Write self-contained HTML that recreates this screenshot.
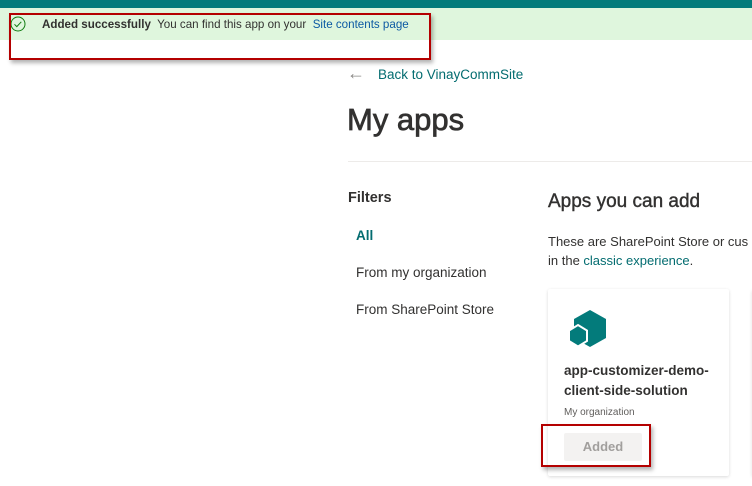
<!DOCTYPE html>
<html><head><meta charset="utf-8"><style>
body{margin:0;width:752px;height:486px;overflow:hidden;background:#fff;font-family:"Liberation Sans",sans-serif;position:relative;color:#323130}
.a{position:absolute;white-space:nowrap}
</style></head><body>
<div class="a" style="left:0;top:0;width:752px;height:8px;background:#037b7b"></div>
<div class="a" style="left:0;top:8px;width:752px;height:32px;background:#dff6dd"></div>
<svg class="a" style="left:10px;top:16px" width="16" height="16" viewBox="0 0 16 16"><circle cx="8" cy="8" r="7" fill="none" stroke="#107c10" stroke-width="1"/><path d="M4.5 8.3l2.3 2.3 4.5-4.8" fill="none" stroke="#107c10" stroke-width="1"/></svg>
<div class="a" style="left:42px;top:18px;font-size:11.6px;color:#323130"><b style="font-weight:600">Added successfully</b>&nbsp; You can find this app on your&nbsp; <span style="color:#0b59a3">Site contents page</span></div>
<div class="a" style="left:9px;top:13px;width:418px;height:43px;border:2px solid #b40000;box-shadow:2px 3px 4px rgba(0,0,0,.3)"></div>
<div class="a" style="left:347px;top:63px;font-size:18px;color:#8a8886">←</div>
<div class="a" style="left:378px;top:67px;font-size:13.5px;color:#036c70">Back to VinayCommSite</div>
<div class="a" style="left:347px;top:102px;font-size:31px;color:#323130;-webkit-text-stroke:0.7px #323130">My apps</div>
<div class="a" style="left:348px;top:161px;width:404px;height:1px;background:#edebe9"></div>
<div class="a" style="left:348px;top:190px;font-size:14.5px;font-weight:bold">Filters</div>
<div class="a" style="left:356px;top:228px;font-size:13.5px;color:#036c70;font-weight:bold">All</div>
<div class="a" style="left:356px;top:265px;font-size:13.5px">From my organization</div>
<div class="a" style="left:356px;top:302px;font-size:13.5px">From SharePoint Store</div>
<div class="a" style="left:548px;top:191px;font-size:19px;-webkit-text-stroke:0.4px #323130">Apps you can add</div>
<div class="a" style="left:548px;top:234px;font-size:13px">These are SharePoint Store or cus</div>
<div class="a" style="left:548px;top:253px;font-size:13px">in the <span style="color:#036c70">classic experience</span>.</div>
<div class="a" style="left:548px;top:289px;width:181px;height:187px;background:#fff;border-radius:2px;box-shadow:0 1px 3px rgba(0,0,0,.15)"></div>
<div class="a" style="left:752px;top:290px;width:2px;height:186px;box-shadow:0 1px 3px rgba(0,0,0,.15)"></div>
<svg class="a" style="left:560px;top:305px" width="52" height="52" viewBox="560 305 52 52"><polygon points="590,310 606,319 606,338 590,347 574,338 574,319" fill="#037b7b"/><polygon points="578,325 587,330.5 587,341 578,346.5 569,341 569,330.5" fill="#037b7b" stroke="#fff" stroke-width="2"/></svg>
<div class="a" style="left:564px;top:361px;font-size:13.5px;font-weight:bold;line-height:20px">app-customizer-demo-<br>client-side-solution</div>
<div class="a" style="left:564px;top:407px;font-size:10px;color:#605e5c">My organization</div>
<div class="a" style="left:564px;top:433px;width:78px;height:28px;background:#f3f2f1;border-radius:2px;color:#a19f9d;font-size:13px;text-align:center;line-height:28px;font-weight:bold">Added</div>
<div class="a" style="left:541px;top:424px;width:106px;height:39px;border:2px solid #b40000;box-shadow:2px 3px 4px rgba(0,0,0,.3)"></div>
</body></html>
